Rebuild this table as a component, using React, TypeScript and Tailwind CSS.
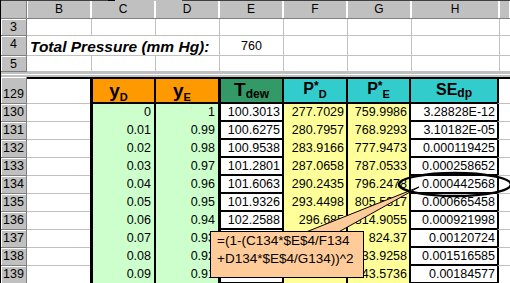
const font = "font-['Liberation_Sans',Arial,sans-serif]";

// cells under the formula callout are left empty: they are hidden in the sheet
const data: string[][] = [
  ["130", "0", "1", "100.3013", "277.7029", "759.9986", "3.28828E-12"],
  ["131", "0.01", "0.99", "100.6275", "280.7957", "768.9293", "3.10182E-05"],
  ["132", "0.02", "0.98", "100.9538", "283.9166", "777.9473", "0.000119425"],
  ["133", "0.03", "0.97", "101.2801", "287.0658", "787.0533", "0.000258652"],
  ["134", "0.04", "0.96", "101.6063", "290.2435", "796.2478", "0.000442568"],
  ["135", "0.05", "0.95", "101.9326", "293.4498", "805.5317", "0.000665458"],
  ["136", "0.06", "0.94", "102.2588", "296.685", "814.9055", "0.000921998"],
  ["137", "0.07", "0.93", "", "", "824.37", "0.00120724"],
  ["138", "0.08", "0.92", "", "", "833.9258", "0.001516585"],
  ["139", "0.09", "0.91", "", "", "843.5736", "0.00184577"],
];

const rowHead =
  "w-[26px] shrink-0 bg-[#c0c0c0] border-r border-b border-[#808080] shadow-[inset_1px_1px_0_#ffffff] text-center text-black";
const colHead =
  "shrink-0 border-l border-white border-r border-[#808080] text-center leading-[17px]";
const grid = "shrink-0 border-l border-b border-[#c0c0c0]";

function UpperRow({ n, h, children }: { n: string; h: string; children?: React.ReactNode }) {
  return (
    <div className={`flex ${h}`}>
      <div className={`${rowHead} leading-[15px] pt-[1px]`}>{n}</div>
      {children ?? (
        <>
          <div className="w-[64px] shrink-0 border-b border-[#c0c0c0]" />
          <div className={`${grid} w-[64px]`} />
          <div className={`${grid} w-[64px]`} />
          <div className={`${grid} w-[64px]`} />
          <div className={`${grid} w-[64px]`} />
          <div className={`${grid} w-[64px]`} />
          <div className={`${grid} w-[88px]`} />
          <div className={`${grid} flex-1`} />
        </>
      )}
    </div>
  );
}

export default function App() {
  return (
    <div
      className={`${font} relative w-[510px] h-[283px] overflow-hidden bg-white border-l border-black text-[12.5px] text-black`}
    >
      {/* strip left over from the bar above */}
      <div className="flex h-[1px]">
        <div className="w-[107px] bg-[#404040]" />
        <div className="w-[7px] bg-black" />
        <div className="w-[67px] bg-[#c0c0c0]" />
        <div className="flex-1 bg-[#404040]" />
      </div>

      {/* column letters */}
      <div className="flex h-[18px] bg-[#c0c0c0] border-b border-[#808080] text-[12px]">
        <div className="w-[26px] shrink-0 border-r border-[#808080]" />
        <div className={`${colHead} w-[64px]`}>B</div>
        <div className={`${colHead} w-[64px]`}>C</div>
        <div className={`${colHead} w-[64px]`}>D</div>
        <div className={`${colHead} w-[64px]`}>E</div>
        <div className={`${colHead} w-[64px]`}>F</div>
        <div className={`${colHead} w-[64px]`}>G</div>
        <div className={`${colHead} w-[88px]`}>H</div>
        <div className={`${colHead} flex-1`} />
      </div>

      <UpperRow n="3" h="h-[17px]" />
      <UpperRow n="4" h="h-[20px]">
        <div className="w-[192px] shrink-0 border-b border-[#c0c0c0] pl-[3px] pt-[2px] text-[15.5px] font-bold italic leading-[18px] whitespace-nowrap">
          Total Pressure (mm Hg):
        </div>
        <div className={`${grid} w-[64px] text-center leading-[18px] pt-[1px]`}>760</div>
        <div className={`${grid} w-[64px]`} />
        <div className={`${grid} w-[64px]`} />
        <div className={`${grid} w-[88px]`} />
        <div className={`${grid} flex-1`} />
      </UpperRow>
      <UpperRow n="5" h="h-[16px]" />

      {/* frozen pane split */}
      <div className="h-[5px] border-t-2 border-b-2 border-[#c0c0c0] bg-white" />

      {/* table header row 129 */}
      <div className="flex h-[27px]">
        <div className={`${rowHead} leading-[16px] pt-[9px]`}>129</div>
        <div className="flex flex-1 border-t-2 border-black">
          <div className="w-[63px] shrink-0 border-b border-[#c0c0c0]" />
          <div className="w-[64px] shrink-0 bg-[#ff9900] border-l-[3px] border-b-2 border-black text-center font-bold text-[19px] leading-[23px] pr-[10px]">
            y<span className="relative top-[4px] text-[11px]">D</span>
          </div>
          <div className="w-[64px] shrink-0 bg-[#ff9900] border-l-2 border-b-2 border-black text-center font-bold text-[19px] leading-[23px] pr-[10px]">
            y<span className="relative top-[4px] text-[11px]">E</span>
          </div>
          <div className="w-[64px] shrink-0 bg-[#339966] border-l-[3px] border-b-2 border-black text-center font-bold text-[19px] leading-[21px]">
            T<span className="relative top-[2px] text-[12px]">dew</span>
          </div>
          <div className="w-[64px] shrink-0 bg-[#33cccc] border-l-2 border-b-2 border-black text-center font-bold text-[16px] leading-[19px]">
            P<span className="relative -top-[4px] text-[12px]">*</span>
            <span className="relative top-[4px] text-[11px]">D</span>
          </div>
          <div className="w-[63px] shrink-0 bg-[#33cccc] border-l-2 border-b-2 border-black text-center font-bold text-[16px] leading-[19px]">
            P<span className="relative -top-[4px] text-[12px]">*</span>
            <span className="relative top-[4px] text-[11px]">E</span>
          </div>
          <div className="w-[88px] shrink-0 bg-[#33cccc] border-l-2 border-b-2 border-black text-center font-bold text-[16px] leading-[22px]">
            SE<span className="relative top-[2px] text-[12px]">dp</span>
          </div>
          <div className="flex-1 border-l-2 border-black border-b border-b-[#c0c0c0]" />
        </div>
      </div>

      {/* data rows */}
      {data.map((r) => (
        <div key={r[0]} className="flex h-[18px] leading-[16px]">
          <div className={rowHead}>{r[0]}</div>
          <div className="w-[63px] shrink-0 border-b border-[#c0c0c0]" />
          <div className="w-[64px] shrink-0 bg-[#ccffcc] border-l-[3px] border-black text-right pr-[3px]">{r[1]}</div>
          <div className="w-[64px] shrink-0 bg-[#ccffcc] border-l-2 border-black text-right pr-[3px]">{r[2]}</div>
          <div className="w-[64px] shrink-0 bg-white border-l-[3px] border-b-2 border-black text-right pr-[2px]">{r[3]}</div>
          <div className="w-[64px] shrink-0 bg-[#ffff99] border-l-2 border-black text-right pr-[2px]">{r[4]}</div>
          <div className="w-[63px] shrink-0 bg-[#ffff99] border-l-2 border-black text-right pr-[2px]">{r[5]}</div>
          <div className="w-[88px] shrink-0 bg-white border-l-2 border-b-2 border-black text-right pr-[2px]">{r[6]}</div>
          <div className="flex-1 border-l-2 border-black border-b border-b-[#c0c0c0]" />
        </div>
      ))}

      {/* drawing layer: highlight ellipse and callout pointer */}
      <svg className="absolute left-0 top-0 pointer-events-none" width="510" height="283">
        <polygon points="418,187 300,234 334,234" fill="#ffcc99" stroke="#000" strokeWidth="1" />
        <ellipse cx="454" cy="184.5" rx="56" ry="11.5" fill="none" stroke="#000" strokeWidth="2.5" />
      </svg>
      <div className="absolute left-[209px] top-[231px] w-[154px] h-[47px] bg-[#ffcc99] border border-black pl-[6px] text-[13.5px] leading-[18px] whitespace-nowrap">
        <div>=(1-(C134*$E$4/F134</div>
        <div>+D134*$E$4/G134))^2</div>
      </div>
    </div>
  );
}
